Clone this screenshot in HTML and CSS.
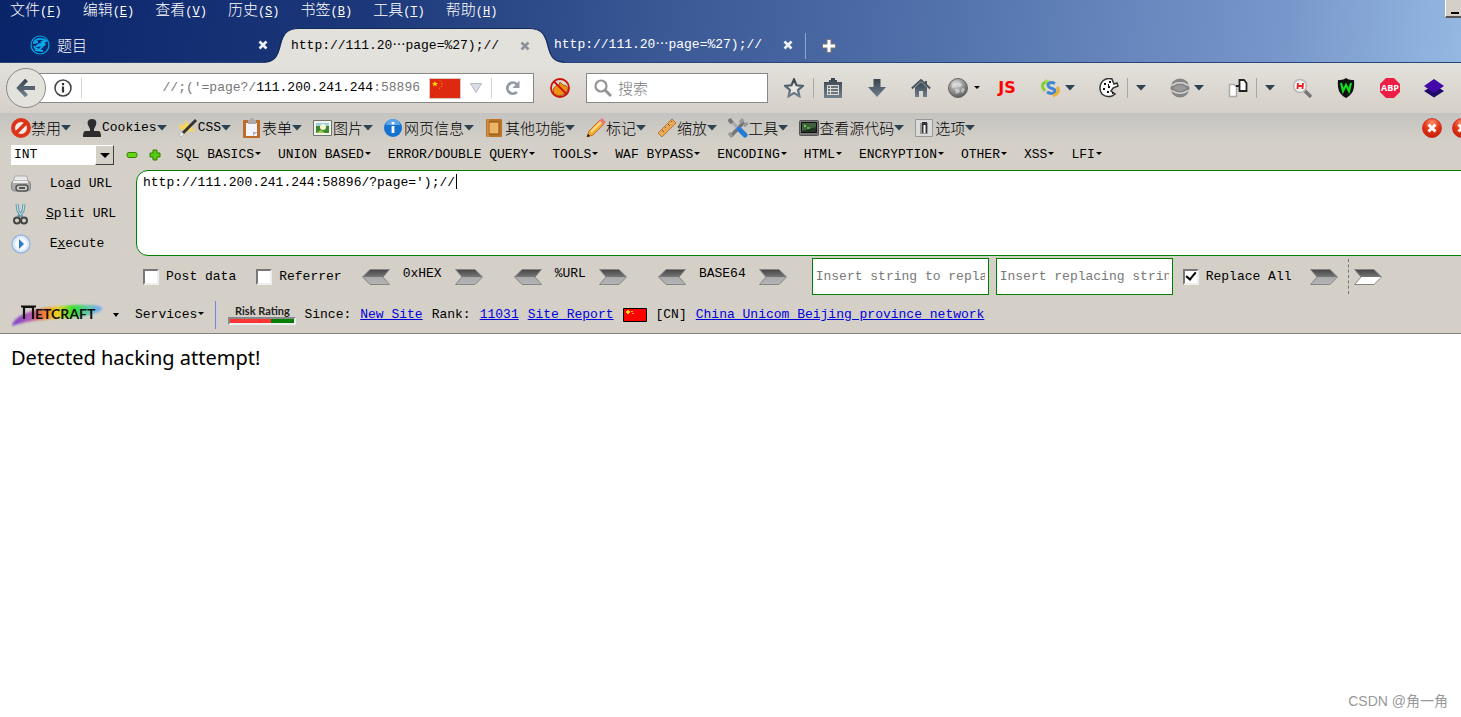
FILE: index.html
```html
<!DOCTYPE html>
<html lang="zh-CN">
<head>
<meta charset="utf-8">
<title>http://111.200.241.244:58896/?page=');//</title>
<link rel="stylesheet" href="styles.css">
</head>
<body>
<svg class="defs" aria-hidden="true">
  <defs>
    <linearGradient id="steel" x1="0" y1="0" x2="0" y2="1"><stop offset="0" stop-color="#38444f"/><stop offset="1" stop-color="#71808f"/></linearGradient>
    <linearGradient id="chev" x1="0" y1="0" x2="0" y2="1"><stop offset="0" stop-color="#444"/><stop offset=".5" stop-color="#777"/><stop offset=".52" stop-color="#aaa"/><stop offset="1" stop-color="#b5b5b5"/></linearGradient>
    <linearGradient id="chevw" x1="0" y1="0" x2="0" y2="1"><stop offset="0" stop-color="#444"/><stop offset=".5" stop-color="#777"/><stop offset=".52" stop-color="#fff"/><stop offset="1" stop-color="#fff"/></linearGradient>
    <radialGradient id="red" cx=".5" cy=".2" r=".9"><stop offset="0" stop-color="#ff8a66"/><stop offset=".5" stop-color="#e03414"/><stop offset="1" stop-color="#c01800"/></radialGradient>
    <radialGradient id="grey" cx=".4" cy=".3" r=".7"><stop offset="0" stop-color="#ddd"/><stop offset="1" stop-color="#5c5c5c"/></radialGradient>
    <linearGradient id="rainbow"><stop offset="0" stop-color="#7a3fc8"/><stop offset=".2" stop-color="#b05cb8"/><stop offset=".35" stop-color="#f07830"/><stop offset=".5" stop-color="#f5d020"/><stop offset=".68" stop-color="#30e030"/><stop offset=".85" stop-color="#60c8b0"/><stop offset="1" stop-color="#7aa0ff"/></linearGradient>
    <filter id="soft"><feGaussianBlur stdDeviation="1"/></filter>
    <symbol id="x" viewBox="0 0 10 10"><path d="M1.500 1.500 8.500 8.500M8.500 1.500 1.500 8.500" stroke="currentColor" stroke-width="2.600"/></symbol>
    <symbol id="caret" viewBox="0 0 10 6"><path d="M0 0h10L5 5.500z" fill="#2f4252"/></symbol>
    <symbol id="left" viewBox="0 0 28 16"><path d="M.5 8 8 .5h19.500L21 8l6.500 7.500H8z" fill="url(#chev)" stroke="#858585"/></symbol>
    <symbol id="right" viewBox="0 0 28 16"><path d="M27.500 8 20 .5H.5L7 8 .5 15.500H20z" fill="url(#chev)" stroke="#858585"/></symbol>
    <symbol id="rightw" viewBox="0 0 28 16"><path d="M27.500 8 20 .5H.5L7 8 .5 15.500H20z" fill="url(#chevw)" stroke="#858585"/></symbol>
    <symbol id="err" viewBox="0 0 20 20"><circle cx="10" cy="10" r="9.500" fill="url(#red)" stroke="#c22" stroke-width=".8"/><path d="m6.500 6.500 7 7m0-7-7 7" stroke="#fff" stroke-width="3"/></symbol>
  </defs>
</svg>

<header class="top">
  <nav class="menu">
    <button>文件<span>(<u>F</u>)</span></button><button>编辑<span>(<u>E</u>)</span></button><button>查看<span>(<u>V</u>)</span></button><button>历史<span>(<u>S</u>)</span></button><button>书签<span>(<u>B</u>)</span></button><button>工具<span>(<u>T</u>)</span></button><button>帮助<span>(<u>H</u>)</span></button>
    <button class="minimize" aria-label="最小化"></button>
  </nav>
  <div class="tabs">
    <div class="tab first">
      <svg width="20" height="20" viewBox="0 0 20 20" fill="none" stroke="#08a8e8"><circle cx="10" cy="10" r="9" stroke-width="1.200"/><path d="M4 7c3-4 9-4 12-1l-5 1 4 1c-5 1-7 1-8 3l7-1-4 4c-3 1-5-1-6-3M5 15l8 1M3 8l5-1" stroke-width="1.800"/></svg>
      <span class="name">题目</span>
      <button class="close" aria-label="关闭"><svg width="10" height="10"><use href="#x"/></svg></button>
    </div>
    <svg class="curve" width="34" height="35" viewBox="0 0 34 35"><path d="M0 35C11 34 14 29 17 17S24 1 34 .5V35z" fill="#e3e1db"/><path d="M0 34C11 33 13 29 16 17S24 1 34 .5" fill="none" stroke="#142a55"/></svg>
    <div class="tab active">
      <span class="name">http://111.20<span class="dots">…</span>page=%27);//</span>
      <button class="close" aria-label="关闭"><svg width="10" height="10"><use href="#x"/></svg></button>
    </div>
    <svg class="curve" width="34" height="35" viewBox="0 0 34 35"><path d="M34 35C23 34 20 29 17 17S10 1 0 .5V35z" fill="#e3e1db"/><path d="M34 34C23 33 21 29 18 17S10 1 0 .5" fill="none" stroke="#142a55"/></svg>
    <div class="tab last">
      <span class="name">http://111.20<span class="dots">…</span>page=%27);//</span>
      <button class="close" aria-label="关闭"><svg width="10" height="10"><use href="#x"/></svg></button>
    </div>
    <button class="newtab" aria-label="新标签页"><svg width="14" height="14" viewBox="0 0 14 14"><path d="M7 0v14M0 7h14" stroke="#777" stroke-width="5"/><path d="M7 1v12M1 7h12" stroke="#fff" stroke-width="3"/></svg></button>
  </div>
</header>

<div class="navbar">
  <button class="back" aria-label="后退"><svg width="20" height="20" viewBox="0 0 20 20"><path d="M10.500 2 3 10l7.500 8M4 10h15" fill="none" stroke="url(#steel)" stroke-width="4"/><path d="M4 8.200h15v3.600H4z" fill="#55626f"/></svg></button>
  <div class="urlbox">
    <svg width="18" height="18" viewBox="0 0 18 18"><circle cx="9" cy="9" r="8" fill="#fff" stroke="#484848" stroke-width="1.600"/><path d="M9 7.500v6M9 4v2.200" stroke="#333" stroke-width="2.200"/></svg>
    <i class="sep"></i>
    <div class="url" role="textbox" contenteditable="true" aria-label="地址">//;('=page?/<b>111.200.241.244</b>:58896</div>
    <svg width="32" height="21" viewBox="0 0 32 21"><path fill="#de2910" stroke="#d8c8c4" d="M.5.5h31v20H.5z"/><path d="m6 3 .8 2 2.200.1-1.700 1.300.6 2.100L6 7.300 4.100 8.500l.6-2.100L3 5.100 5.200 5z" fill="#ffde00"/><path d="m11 2.500 1 1m1 1.500v1.500M13 8l-1 1m-1 1-1 .5" stroke="#e8a010"/></svg>
    <button aria-label="历史记录"><svg width="12" height="10" viewBox="0 0 12 10"><path d="M.5.5h11L6 9.500z" fill="#d9dde4" stroke="#b4bac4"/></svg></button>
    <i class="sep"></i>
    <button class="reload" aria-label="刷新"><svg width="16" height="16" viewBox="0 0 16 16"><path d="M11.800 12A5.500 5.500 0 1 1 11.500 4" fill="none" stroke="#929ba6" stroke-width="2.800"/><path d="M14.500.5v7.500H7.500z" fill="#929ba6"/></svg></button>
  </div>
  <button aria-label="附加组件"><svg width="20" height="20" viewBox="0 0 20 20"><path d="M3 12c1-3 3-5 6-5l1-3 3 3c3 0 5 2 5 4l-3 5-6 2-5-2z" fill="#f09010" stroke="#a06010"/><circle cx="10" cy="10" r="9" fill="none" stroke="#cc1010" stroke-width="1.800"/><path d="m4 3.500 13 13" stroke="#cc1010" stroke-width="1.800"/></svg></button>
  <label class="search"><svg width="18" height="18" viewBox="0 0 18 18" fill="none" stroke="#959595"><circle cx="7" cy="7" r="5.500" stroke-width="2.200"/><path d="m11 11 6 6" stroke-width="3"/></svg><input type="text" placeholder="搜索" aria-label="搜索"></label>
  <div class="tools">
    <div class="set marks">
      <button aria-label="收藏"><svg width="20" height="20" viewBox="0 0 20 20"><path d="m10 1.500 2.500 5.800 6.200.6-4.700 4.200 1.400 6.200-5.400-3.200-5.400 3.200L6 12.100 1.300 7.900l6.200-.6z" fill="#e8e6e1" stroke="url(#steel)" stroke-width="2.200"/></svg></button>
      <i class="sep dark"></i>
      <button aria-label="书签"><svg width="20" height="20" viewBox="0 0 20 20"><path d="M1 4h5V2h2V0h4v2h2v2h5v16H1z" fill="url(#steel)"/><path d="M4 7h12v10H4z" fill="#dedbd5"/><path d="M5 9h2m1 0h7m-10 3h2m1 0h7m-10 3h2m1 0h7" stroke="#46535f" stroke-width="1.500"/></svg></button>
    </div>
    <button aria-label="下载"><svg width="20" height="20" viewBox="0 0 20 20"><path d="M6.500 1h7v8H19l-9 10L1 9h5.500z" fill="url(#steel)"/></svg></button>
    <button aria-label="主页"><svg width="20" height="20" viewBox="0 0 20 20"><path d="M4 9.500 10 4l6 5.500V19h-4v-6H8v6H4z" fill="url(#steel)"/><path d="m.8 10.500 9.200-8.500 9.200 8.500M15 3v4" fill="none" stroke="#46535f" stroke-width="2"/></svg></button>
    <div class="set near">
      <button aria-label="代理"><svg width="20" height="20" viewBox="0 0 20 20"><circle cx="10" cy="10" r="9.500" fill="url(#grey)" stroke="#666"/><path d="m4 5 4 0 0 4-4 1zm7-1 4 3-4 2-2-2zm-4 7 4 0 1 3-4 2zm7-1 3 1-2 4-2-1z" fill="#e4e4e4" opacity=".6"/></svg></button>
      <svg width="6" height="4" viewBox="0 0 6 4"><path d="M0 0h6L3 3z"/></svg>
    </div>
    <button class="js near">JS</button>
    <div class="set close-set">
      <button aria-label="同步"><svg width="20" height="20" viewBox="0 0 20 20" fill="none"><path d="M4 13C0 9 1 5 5 4" stroke="#86cf32" stroke-width="3"/><path d="m4 1 5 2-4 4z" fill="#a8dc50"/><path d="M14 5.500C9 3 5 6 8 9c2 2 6 1 6 4s-5 3-8 1" stroke="#4286d4" stroke-width="3"/><path d="M16 9c3 4 1 7-4 9" stroke="#edb12e" stroke-width="3"/></svg></button>
      <svg width="10" height="6"><use href="#caret"/></svg>
    </div>
    <div class="set">
      <button aria-label="Cookie"><svg width="20" height="20" viewBox="0 0 20 20"><path d="M13 1C6-1 1 4 1 10s5 10 12 8l3-2-4-3 2-3 5-2-1-3-3 1z" fill="#fff" stroke="#333" stroke-width="1.500"/><path d="M5 6h2m3-2h2m-3 5h2M4 11h2m2 3h2m3 1h1M9 7h1" stroke="#111" stroke-width="2"/></svg></button>
      <i class="sep dark"></i>
      <svg width="10" height="6"><use href="#caret"/></svg>
    </div>
    <div class="set close-set">
      <button aria-label="代理切换"><svg width="20" height="20" viewBox="0 0 20 20"><circle cx="10" cy="10" r="9.500" fill="#858585"/><ellipse cx="10" cy="10" rx="6" ry="3" fill="#999"/><path d="M0 7h3c3-3 11-3 14 0h3M0 13h3c3 3 11 3 14 0h3" fill="none" stroke="#d8d5d0" stroke-width="1.500"/></svg></button>
      <svg width="10" height="6"><use href="#caret"/></svg>
    </div>
    <div class="set">
      <button aria-label="复制页面"><svg width="20" height="20" viewBox="0 0 20 20"><path d="M1.500 6.500H6L8.500 9v9.500h-7z" fill="#fff" stroke="#aaa" stroke-width="1.500"/><path d="M11.500 2H16l2.500 3v8h-7zM8 8h3" fill="#fff" stroke="#222" stroke-width="1.800"/></svg></button>
      <i class="sep dark"></i>
      <svg width="10" height="6"><use href="#caret"/></svg>
    </div>
    <button class="near" aria-label="查找"><svg width="20" height="20" viewBox="0 0 20 20"><path d="m12 12 7 7" stroke="#777" stroke-width="3.500"/><circle cx="8" cy="8" r="6.500" fill="#f5f3f1" stroke="#b7b7b7" stroke-width="1.500"/><path d="M6 5 5.500 11M11 5l-.5 6M6 8h5" stroke="#e22" stroke-width="1.800"/></svg></button>
    <button aria-label="WOT"><svg width="20" height="20" viewBox="0 0 20 20"><path d="M10 0c3 2 5 2 8 2 1 10-2 15-8 18C4 17 1 12 2 2c3 0 5 0 8-2z" fill="#111"/><path d="m5 5 2 8 3-6 3 6 2-8" fill="none" stroke="#10dd20" stroke-width="2.200"/></svg></button>
    <button class="abp">ABP</button>
    <button aria-label="图层"><svg width="20" height="20" viewBox="0 0 20 20"><path d="m0 13 5-3 5 3 5-3 5 3-10 6.500z" fill="#1d0a68"/><path d="M10 1 20 8l-10 7L0 8z" fill="#4407a8"/></svg></button>
  </div>
</div>

<div class="dev">
  <button><svg width="20" height="20" viewBox="0 0 20 20"><circle cx="10" cy="10" r="8" fill="#f0ede9" stroke="#dc3518" stroke-width="4"/><path d="m4.500 15.500 11-11" stroke="#dc3518" stroke-width="3.500"/></svg>禁用<svg width="10" height="6"><use href="#caret"/></svg></button>
  <button><svg width="20" height="20" viewBox="0 0 20 20"><path d="M10 1c4 0 5 3 4 6l-2 4v2h5c2 1 2 4 2 6H1c0-2 0-5 2-6h5v-2L6 7C5 4 6 1 10 1z" fill="#2d2d2d"/></svg><span>Cookies</span><svg width="10" height="6"><use href="#caret"/></svg></button>
  <button><svg width="20" height="20" viewBox="0 0 20 20"><path d="m2 6 4 1 2-5 2 4 6-2-2 5 3 5-7-1-4 4-1-5-4-2z" fill="#f5d55e"/><path d="M2 18 18 2" stroke="#333" stroke-width="3"/><path d="m2 18 3-3" stroke="#eee" stroke-width="3"/></svg><span>CSS</span><svg width="10" height="6"><use href="#caret"/></svg></button>
  <button><svg width="20" height="20" viewBox="0 0 20 20"><rect x="1" y="2" width="17" height="18" rx="1" fill="#bd6b27"/><path d="M4 5h11v13H4z" fill="#f4f4fb"/><path d="M6 2h2c0-3 4-3 4 0h2v4H6z" fill="#aaa"/><path d="M11 18v-4h4z" fill="#a9b0c8"/></svg>表单<svg width="10" height="6"><use href="#caret"/></svg></button>
  <button><svg width="20" height="20" viewBox="0 0 20 20"><path d="M.5 2.500h18v15H.5z" fill="#f4f4ee" stroke="#6e7468"/><path d="M3 5h13v10H3z" fill="#3d872e"/><path d="M3 5h13v3H3z" fill="#9ccde0"/><circle cx="10" cy="9" r="3" fill="#f5f4ca"/><path d="m3 15 5-3 4 3z" fill="#9ccb50"/></svg>图片<svg width="10" height="6"><use href="#caret"/></svg></button>
  <button><svg width="20" height="20" viewBox="0 0 20 20"><circle cx="9" cy="10" r="9" fill="#1672cf"/><path d="M2 7a7 6 0 0 1 14 0" fill="#5ba5e8"/><path d="M9 8v7M9 4v2.500" stroke="#fff" stroke-width="2.800"/></svg>网页信息<svg width="10" height="6"><use href="#caret"/></svg></button>
  <button><svg width="20" height="20" viewBox="0 0 20 20"><rect x="1" y="1" width="16" height="18" rx="1" fill="#b97528"/><path d="M4 4h10v12H4z" fill="#efb566" stroke="#8c5013"/><path d="M3 1v18" stroke="#e1a75d"/></svg>其他功能<svg width="10" height="6"><use href="#caret"/></svg></button>
  <button><svg width="20" height="20" viewBox="0 0 20 20"><path d="M1 19 3 13 14 2l4 4L7 17z" fill="#f7a936" stroke="#bd7520"/><path d="m13 3 3-3 4 4-3 3z" fill="#e57979"/><path d="m5 14 10-10" stroke="#ffdf91" stroke-width="2"/><path d="m1 19 1-3 2 2z"/></svg>标记<svg width="10" height="6"><use href="#caret"/></svg></button>
  <button><svg width="20" height="20" viewBox="0 0 20 20"><path d="M1 15 15 1l4 4L5 19z" fill="#e8a856" stroke="#b97835"/><path d="m5 12 2 2m1-5 1 1m2-4 2 2m1-5 1 1" stroke="#8b5a22"/></svg>缩放<svg width="10" height="6"><use href="#caret"/></svg></button>
  <button><svg width="20" height="20" viewBox="0 0 20 20"><path d="m3 18 13-14" stroke="#777" stroke-width="3.500"/><path d="m12 5 3-4m1 7 4-3M1 15l3 4" stroke="#999" stroke-width="3"/><path d="m3 3 8 8" stroke="#aaa" stroke-width="3"/><path d="m1 1 3 4" stroke="#777" stroke-width="4"/><path d="m11 11 6 6" stroke="#287bd5" stroke-width="5" stroke-linecap="round"/></svg>工具<svg width="10" height="6"><use href="#caret"/></svg></button>
  <button><svg width="20" height="20" viewBox="0 0 20 20"><rect x=".5" y="2.500" width="19" height="15" rx="1" fill="#777" stroke="#555"/><path d="M2.500 4.500h15v10h-15z" fill="#203322" stroke="#111"/><path d="M3 5h14v4L3 13z" fill="#40613f"/><path d="m5 7 2 1-2 1m3 1h3" fill="none" stroke="#7ae553"/></svg>查看源代码<svg width="10" height="6"><use href="#caret"/></svg></button>
  <button><svg width="20" height="20" viewBox="0 0 20 20"><path d="M.5 1.500h17v17H.5z" fill="#dadada" stroke="#999"/><path d="M5 5h8v11H5z" fill="#999"/><path d="M7 4h5v11H7z" fill="#333"/><path d="M8.500 7h2v8h-2z" fill="#fff"/></svg>选项<svg width="10" height="6"><use href="#caret"/></svg></button>
  <div class="errors"><svg width="20" height="20"><use href="#err"/></svg><svg width="20" height="20"><use href="#err"/></svg></div>
</div>

<div class="hackmenu">
  <div class="pick"><select aria-label="类型"><option>INT</option></select><i class="drop"></i></div>
  <button aria-label="减少"><svg width="12" height="12" viewBox="0 0 12 12"><rect x="1" y="3.500" width="10" height="5" rx="2" fill="#67d51a" stroke="#338000"/></svg></button>
  <button aria-label="增加"><svg width="12" height="12" viewBox="0 0 12 12"><path d="M4 1h4v3h3v4H8v3H4V8H1V4h3z" fill="#55cc10" stroke="#338000" stroke-linejoin="round"/></svg></button>
  <div class="words">
    <button class="dd">SQL BASICS</button><button class="dd">UNION BASED</button><button class="dd">ERROR/DOUBLE QUERY</button><button class="dd">TOOLS</button><button class="dd">WAF BYPASS</button><button class="dd">ENCODING</button><button class="dd">HTML</button><button class="dd">ENCRYPTION</button><button class="dd">OTHER</button><button class="dd">XSS</button><button class="dd">LFI</button>
  </div>
</div>

<div class="hack">
  <div class="actions">
    <button><svg width="20" height="20" viewBox="0 0 20 20"><path d="M4 2h12l1 6H2z" fill="#e9e9e9" stroke="#aaa"/><rect x=".5" y="7" width="19" height="10" rx="3" fill="#aaa" stroke="#888"/><path d="M2 8h15" stroke="#eee" stroke-width="2"/><rect x="5" y="11" width="12" height="6" rx="3" fill="#ccc" stroke="#555" stroke-width="1.500"/><path d="M8 14h6" stroke="#555" stroke-width="2"/></svg><span>Lo<u>a</u>d URL</span></button>
    <button><svg width="20" height="22" viewBox="0 0 20 22"><path d="m6 1 1 7 4 6M13 1l-1 7-5 6" fill="none" stroke="#689bae" stroke-width="3"/><path d="m6 1 1 7 3 4M13 1l-1 7-3 4" fill="none" stroke="#c5e4ee"/><circle cx="6" cy="17.500" r="3" fill="none" stroke="#444" stroke-width="2"/><circle cx="13" cy="17.500" r="3" fill="none" stroke="#444" stroke-width="2"/></svg><span><u>S</u>plit URL</span></button>
    <button><svg width="20" height="20" viewBox="0 0 20 20"><circle cx="10" cy="10" r="9" fill="#dceafa" stroke="#9bb8dc" stroke-width="1.500"/><circle cx="10" cy="10" r="6" fill="#f5faff"/><path d="m8 5 5 5-5 5z" fill="#3478ce"/></svg><span>E<u>x</u>ecute</span></button>
  </div>
  <div class="area"><textarea aria-label="URL" spellcheck="false">http://111.200.241.244:58896/?page=');//</textarea><i class="cursor"></i></div>
</div>

<div class="post">
  <label class="check"><input type="checkbox">Post data</label>
  <label class="check"><input type="checkbox">Referrer</label>
  <div class="coder"><button aria-label="解码"><svg width="28" height="16"><use href="#left"/></svg></button><span>0xHEX</span><button aria-label="编码"><svg width="28" height="16"><use href="#right"/></svg></button></div>
  <div class="coder"><button aria-label="解码"><svg width="28" height="16"><use href="#left"/></svg></button><span>%URL</span><button aria-label="编码"><svg width="28" height="16"><use href="#right"/></svg></button></div>
  <div class="coder"><button aria-label="解码"><svg width="28" height="16"><use href="#left"/></svg></button><span>BASE64</span><button aria-label="编码"><svg width="28" height="16"><use href="#right"/></svg></button></div>
  <div class="replace">
    <input type="text" placeholder="Insert string to replace" aria-label="Insert string to replace">
    <input type="text" placeholder="Insert replacing string" aria-label="Insert replacing string">
    <label class="check"><input type="checkbox" checked>Replace All</label>
  </div>
  <div class="go"><button aria-label="替换"><svg width="28" height="16"><use href="#right"/></svg></button><i class="dash"></i><button aria-label="全部"><svg width="28" height="16"><use href="#rightw"/></svg></button></div>
</div>

<div class="netcraft">
  <button class="logo"><svg width="94" height="26" viewBox="0 0 94 26"><path d="M1 24C3 8 45 2 80 3c16 1 14 6-2 10C55 18 25 15 1 24z" fill="url(#rainbow)" filter="url(#soft)"/><path d="M13 17V5h9v12M10 4.500h15" fill="none" stroke="#111" stroke-width="2.200"/><text x="24" y="17" class="logotext">ETCRAFT</text></svg></button>
  <svg width="6" height="4" viewBox="0 0 6 4"><path d="M0 0h6L3 4z"/></svg>
  <button class="dd services">Services</button>
  <i class="rule"></i>
  <div class="risk">Risk Rating<i class="meter"></i></div>
  <div class="facts">
    <span>Since:</span><a href="#">New Site</a><span>Rank:</span><a href="#">11031</a><a href="#">Site Report</a>
    <svg width="24" height="14" viewBox="0 0 24 14"><path fill="red" stroke="#000" d="M.5.5h23v13H.5z"/><path d="M3 4h4M5 2v4m4-3v1m1 1v1" stroke="#ff0" stroke-width="1.500"/></svg>
    <span>[CN]</span><a href="#">China Unicom Beijing province network</a>
  </div>
</div>

<main>
  <p class="message">Detected hacking attempt!</p>
  <p class="mark">CSDN @角一角</p>
</main>
</body>
</html>
```
FILE: styles.css
```css
* { box-sizing: border-box; }
body {
  margin: 0;
  min-height: 100vh;
  display: flex;
  flex-direction: column;
  overflow: hidden;
  background: #fff;
  color: #000;
  font: 13px/18px "Liberation Mono", "Noto Sans CJK SC", monospace;
}
button, input, select, textarea { font: inherit; color: inherit; border-radius: 0; margin: 0; }
button { border: 0; padding: 0; background: none; white-space: nowrap; }
svg { display: block; flex: none; }
.defs { position: absolute; width: 0; height: 0; }

.top {
  background: linear-gradient(96deg, #0a246a 0%, #1c387a 25%, #3a5894 45%, #5373ad 65%, #7898cb 88%, #94b8e2 100%);
  color: #fff;
  border-bottom: 1px solid #28467c;
}
.menu { display: flex; gap: 21px; height: 28px; padding-left: 10px; align-items: flex-start; }
.menu button { font: 15px/18px "Noto Sans CJK SC", sans-serif; font-weight: 300; }
.menu span { font: 12px/18px "Liberation Mono", monospace; }
.menu .minimize {
  margin-left: auto;
  width: 16px;
  height: 18px;
  background: linear-gradient(#000, #000) 5px 12px / 8px 2px no-repeat #d4d0c8;
  border-left: 1px solid #fff;
  border-bottom: 2px solid #555;
}
.tabs { display: flex; height: 34px; }
.tab { display: flex; align-items: center; gap: 7px; }
.name { flex: 1; white-space: nowrap; }
.dots { font-family: "Noto Sans CJK SC", sans-serif; line-height: 1; }
.first { width: 264px; padding-left: 30px; }
.first .name { font: 15px/20px "Noto Sans CJK SC", sans-serif; font-weight: 300; }
.first .close { margin-right: -4px; z-index: 1; }
.tab .close { color: #eef1f8; }
.curve { margin-bottom: -1px; }
.active { width: 232px; background: #e3e1db; color: #000; border-top: 1px solid #142a55; margin-bottom: -1px; }
.active .name { margin-left: -7px; }
.active .close { color: #8b9299; }
.last { width: 251px; margin-left: -10px; }
.last .close { margin-right: 12px; }
.newtab { border-left: 1px solid #8fa6cf; height: 26px; margin-top: 5px; padding-left: 16px; }

.navbar {
  display: flex;
  align-items: center;
  height: 50px;
  padding: 0 17px 0 6px;
  background: linear-gradient(#e3e1db, #d5d0c8);
}
.back {
  width: 40px; height: 40px; flex: none;
  display: grid; place-items: center;
  border: 1px solid #888; border-radius: 50%;
  background: #e4e2dc;
  z-index: 1;
}
.urlbox {
  flex: 1;
  display: flex;
  align-items: center;
  gap: 9px;
  height: 30px;
  margin: 0 16px 0 -8px;
  padding: 0 12px 0 15px;
  border: 1px solid #888;
  background: #fff;
}
.reload { margin-left: 4px; }
.url { flex: 1; text-align: right; color: #777; white-space: nowrap; outline: 0; }
.url b { font-weight: 400; color: #000; }
.sep { width: 1px; height: 20px; background: #d5d3ca; flex: none; }
.dark { background: #aaa8a3; }
.search {
  width: 182px; height: 30px;
  margin: 0 16px;
  padding: 0 7px;
  display: flex; align-items: center; gap: 6px;
  border: 1px solid #888; background: #fff;
}
.search input { width: 100%; border: 0; padding: 0; outline: 0; background: none; font: 15px/20px "Noto Sans CJK SC", sans-serif; font-weight: 300; }
::placeholder { color: #777; opacity: 1; }
.tools, .set { display: flex; align-items: center; }
.tools { gap: 24px; }
.set { gap: 8px; }
.marks { gap: 9px; }
.close-set { gap: 4px; }
.near { margin-left: -7px; }
.set.near { gap: 6px; }
.js { width: 20px; color: #f00; font: 700 16px/20px "DejaVu Sans", sans-serif; display: flex; justify-content: center; }
.abp {
  width: 20px; height: 20px;
  display: flex; align-items: center; justify-content: center;
  background: #ed1e45; color: #fff;
  clip-path: polygon(30% 0, 70% 0, 100% 30%, 100% 70%, 70% 100%, 30% 100%, 0 70%, 0 30%);
  font: 700 9px/20px "Open Sans", sans-serif;
}

.dev {
  display: flex;
  align-items: center;
  gap: 11px;
  height: 30px;
  padding-left: 11px;
  background: linear-gradient(#c4c3c0, #d4d0c8);
}
.dev button { display: flex; align-items: center; font: 15px/20px "Noto Sans CJK SC", sans-serif; font-weight: 300; }
.dev button span { font: 13px/18px "Liberation Mono", monospace; }
.errors { display: flex; gap: 10px; margin: 0 -11px 0 auto; }

.hackmenu { display: flex; align-items: center; gap: 11px; height: 27px; padding: 0 0 3px 11px; background: #d4d0c8; }
.pick { position: relative; width: 103px; margin-right: 1px; }
.pick select { display: block; width: 100%; height: 20px; border: 0; padding: 0 3px; appearance: none; background: #fff; }
.drop {
  position: absolute; right: 0; top: 0; width: 19px; height: 20px;
  background: #d4d0c8;
  border: 1px solid; border-color: #fff #404040 #404040 #fff;
  pointer-events: none;
}
.drop::after { content: ""; position: absolute; left: 4px; top: 7px; border: 5px solid transparent; border-top-color: #000; border-bottom: 0; }
.words { display: flex; gap: 17px; margin-left: 4px; }
.dd::after { content: ""; display: inline-block; margin-left: 1px; vertical-align: 3px; border: 3px solid transparent; border-top-color: #000; border-bottom: 0; }

.hack { display: flex; background: #d4d0c8; }
.actions { width: 136px; padding: 4px 0 2px 11px; display: flex; flex-direction: column; justify-content: space-between; }
.actions button { display: flex; align-items: center; }
.actions span { width: 100px; text-align: center; }
.actions button:last-child span { width: 92px; }
.area { flex: 1; position: relative; margin-right: -12px; }
.area textarea {
  display: block; width: 100%; height: 86px; resize: none; outline: 0;
  padding: 3px 6px; border: 1px solid #008000; border-radius: 12px; background: #fff;
}
.cursor { position: absolute; left: calc(40ch + 8px); top: 4px; width: 1px; height: 15px; background: #000; }

.post { display: flex; align-items: center; height: 41px; padding-left: 143px; background: #d4d0c8; white-space: nowrap; }
.check { display: flex; align-items: center; gap: 7px; margin-right: 20px; }
.check input {
  appearance: none; width: 16px; height: 16px; flex: none;
  border: 2px solid; border-color: #777 #eee #eee #777; background: #fff;
  display: grid; place-items: center;
}
.check input:checked::after { content: ""; width: 4px; height: 8px; border: solid #000; border-width: 0 2px 2px 0; transform: rotate(40deg); margin-top: -3px; }
.coder { display: flex; align-items: center; gap: 13px; margin-right: 31px; }
.coder span { padding-bottom: 6px; }
.replace { display: flex; gap: 7px; margin-left: -6px; }
.replace > input { width: 177px; height: 37px; padding: 0 3px; border: 1px solid #008000; background: #fff; outline: 0; }
.replace .check { margin: 0 18px 0 3px; }
.go { display: flex; align-items: center; gap: 5px; }
.dash { height: 35px; border-left: 1px dashed #777; margin-left: 5px; }

.netcraft { display: flex; align-items: center; height: 37px; padding-left: 11px; gap: 8px; background: #d4d0c8; border-bottom: 1px solid #808080; white-space: nowrap; }
.logotext { font: 700 14px "Lato", sans-serif; fill: #111; }
.services { margin-left: 8px; }
.rule { width: 2px; height: 28px; margin: 0 3px; background: linear-gradient(90deg, #8888a8 50%, #c4c8ff 50%); }
.risk { font: 700 11px/12px "Lato", sans-serif; color: #222; text-align: center; width: 68px; }
.meter { display: block; height: 8px; border: 2px solid; border-color: #888 #eee #eee #888; background: linear-gradient(90deg, #ff3535 64%, #008000 64%); }
.facts { display: flex; align-items: center; gap: 9px; }
a { color: #00d; text-decoration: underline; }

main { flex: 1; display: flex; flex-direction: column; justify-content: space-between; padding: 8px 11px 6px; }
main p { margin: 0; }
.message { font: 20px/32px "Noto Sans", sans-serif; }
.mark { align-self: flex-end; padding-right: 2px; color: #999; font: 14px/20px "Liberation Sans", "Noto Sans CJK SC", sans-serif; }
```
